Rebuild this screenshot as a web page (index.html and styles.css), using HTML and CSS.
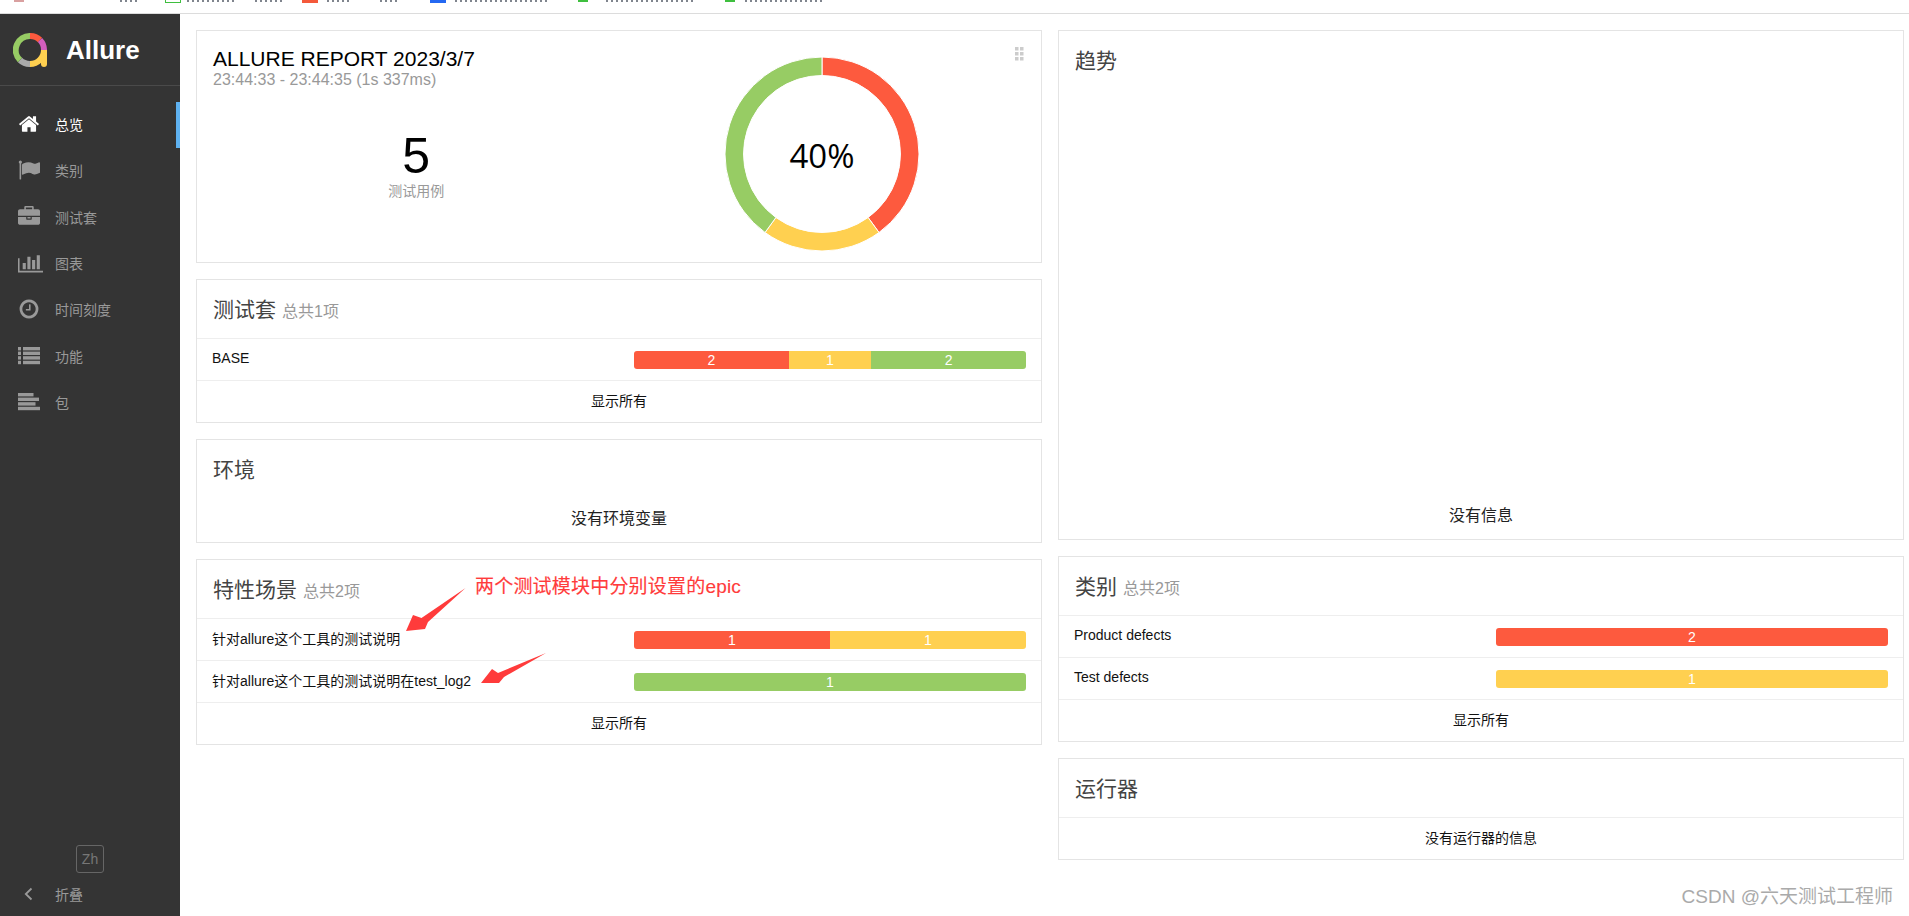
FILE: index.html
```html
<!DOCTYPE html>
<html lang="zh-CN">
<head>
  <meta charset="UTF-8" />
  <title>Allure Report</title>
  <link rel="stylesheet" href="styles.css">
</head>
<body>

  <!-- clipped browser bookmarks bar -->
  <div class="top-strip">
    <i class="frag f1"></i><i class="frag f2"></i><i class="frag f3"></i><i class="frag f4"></i>
    <i class="frag f5"></i><i class="frag f6"></i><i class="frag f7"></i><i class="frag f8"></i>
    <i class="frag f9"></i><i class="frag f10"></i><i class="frag f11"></i><i class="frag f12"></i>
    <i class="frag f13"></i><i class="frag f14"></i>
  </div>

  <div class="app">
    <aside class="sidebar">
      <div class="brand">
        <svg class="brand-logo" viewBox="0 0 34 34">
          <path d="M17 3 A14 14 0 0 1 27 7" fill="none" stroke="#fd5a3e" stroke-width="6" />
          <path d="M27 7 A14 14 0 0 1 31 17" fill="none" stroke="#d35ebe" stroke-width="6" />
          <path d="M31 17 A14 14 0 0 1 17 31" fill="none" stroke="#ffd050" stroke-width="6" />
          <path d="M17 31 A14 14 0 0 1 7 27" fill="none" stroke="#aaaaaa" stroke-width="6" />
          <path d="M7 27 A14 14 0 0 1 17 3" fill="none" stroke="#97cc64" stroke-width="6" />
          <path d="M28 17 H34 V31 Q34 34 31 34 Q28 34 28 31 Z" fill="#ffd050" />
        </svg>
        <span class="brand-name">Allure</span>
      </div>

      <nav class="nav">
        <a class="nav-item active">
          <span class="nav-icon"><svg width="22" height="22" viewBox="0 0 1792 1792"><path d="M1472 992v480q0 26-19 45t-45 19h-384v-384h-256v384h-384q-26 0-45-19t-19-45v-480q0-1 .5-3t.5-3l575-474 575 474q1 2 1 6zm223-69l-62 74q-8 9-21 11h-3q-13 0-21-7l-692-577-692 577q-12 8-24 7-13-2-21-11l-62-74q-8-10-7-23.500t11-21.500l719-599q32-26 76-26t76 26l244 204v-195q0-14 9-23t23-9h192q14 0 23 9t9 23v408l219 182q10 8 11 21.500t-7 23.500z"/></svg></span>
          总览
        </a>
        <a class="nav-item">
          <span class="nav-icon"><svg width="22" height="22" viewBox="0 0 1792 1792"><path d="M320 256q0 72-64 110v1266q0 13-9.500 22.500t-22.500 9.500h-64q-13 0-22.500-9.500t-9.500-22.500v-1266q-64-38-64-110 0-53 37.500-90.500t90.500-37.500 90.500 37.500 37.500 90.500zm1472 64v763q0 25-12.500 38.500t-39.500 27.500q-215 116-369 116-61 0-123.500-22t-108.500-48-115.500-48-142.500-22q-192 0-464 146-17 9-33 9-26 0-45-19t-19-45v-742q0-32 31-55 21-14 79-43 236-120 421-120 107 0 200 29t219 88q38 19 88 19 54 0 117.500-21t110-47 88-47 54.500-21q26 0 45 19t19 45z"/></svg></span>
          类别
        </a>
        <a class="nav-item">
          <span class="nav-icon"><svg width="22" height="22" viewBox="0 0 1792 1792"><path d="M640 256h512v-128h-512v128zm1152 640v480q0 66-47 113t-113 47h-1472q-66 0-113-47t-47-113v-480h672v160q0 26 19 45t45 19h320q26 0 45-19t19-45v-160h672zm-768 0v128h-256v-128h256zm768-480v384h-1792v-384q0-66 47-113t113-47h352v-160q0-40 28-68t68-28h576q40 0 68 28t28 68v160h352q66 0 113 47t47 113z"/></svg></span>
          测试套
        </a>
        <a class="nav-item">
          <span class="nav-icon"><svg width="25" height="22" viewBox="0 0 2048 1792"><path d="M640 896v512h-256v-512h256zm384-512v1024h-256v-1024h256zm1024 1152v128h-2048v-1152h128v1024h1920zm-640-896v768h-256v-768h256zm384-384v1152h-256v-1152h256z"/></svg></span>
          图表
        </a>
        <a class="nav-item">
          <span class="nav-icon"><svg width="22" height="22" viewBox="0 0 1792 1792"><path d="M1024 544v448q0 14-9 23t-23 9h-320q-14 0-23-9t-9-23v-64q0-14 9-23t23-9h224v-352q0-14 9-23t23-9h64q14 0 23 9t9 23zm416 352q0-148-73-273t-198-198-273-73-273 73-198 198-73 273 73 273 198 198 273 73 273-73 198-198 73-273zm224 0q0 209-103 385.500t-279.500 279.500-385.500 103-385.500-103-279.500-279.500-103-385.500 103-385.500 279.500-279.500 385.500-103 385.500 103 279.500 279.500 103 385.500z"/></svg></span>
          时间刻度
        </a>
        <a class="nav-item">
          <span class="nav-icon"><svg width="22" height="18" viewBox="0 0 22 18">
            <rect x="0" y="0" width="3" height="3.400" /><rect x="5" y="0" width="17" height="3.400" />
            <rect x="0" y="4.600" width="3" height="3.400" /><rect x="5" y="4.600" width="17" height="3.400" />
            <rect x="0" y="9.200" width="3" height="3.400" /><rect x="5" y="9.200" width="17" height="3.400" />
            <rect x="0" y="13.800" width="3" height="3.400" /><rect x="5" y="13.800" width="17" height="3.400" />
          </svg></span>
          功能
        </a>
        <a class="nav-item">
          <span class="nav-icon"><svg width="22" height="18" viewBox="0 0 22 18">
            <rect x="0" y="0" width="15.500" height="3.400" />
            <rect x="0" y="4.600" width="21" height="3.400" />
            <rect x="0" y="9.200" width="17.500" height="3.400" />
            <rect x="0" y="13.800" width="22" height="3.400" />
          </svg></span>
          包
        </a>
      </nav>

      <div class="sidebar-foot">
        <span class="lang">Zh</span>
        <a class="collapse">
          <svg class="collapse-icon" width="9" height="14" viewBox="0 0 9 14"><polyline points="7.500,1.500 1.800,7 7.500,12.500" /></svg>
          折叠
        </a>
      </div>
    </aside>

    <main class="content">
      <div class="col">
        <section class="card report">
          <svg class="drag" width="9" height="14" viewBox="0 0 9 14">
            <rect x="0" y="0" width="3.500" height="3.500" /><rect x="5" y="0" width="3.500" height="3.500" />
            <rect x="0" y="5" width="3.500" height="3.500" /><rect x="5" y="5" width="3.500" height="3.500" />
            <rect x="0" y="10" width="3.500" height="3.500" /><rect x="5" y="10" width="3.500" height="3.500" />
          </svg>
          <div class="report-info">
            <h2 class="report-title">ALLURE REPORT 2023/3/7</h2>
            <div class="report-time">23:44:33 - 23:44:35 (1s 337ms)</div>
            <div class="report-count">5</div>
            <div class="report-label">测试用例</div>
          </div>
          <div class="report-chart">
            <svg width="196" height="196" viewBox="-98 -98 196 196">
              <path class="arc" fill="#fd5a3e" d="M0,-97 A97,97 0 0 1 57,78.500 L46.100,63.500 A78.500,78.500 0 0 0 0,-78.500 Z" />
              <path class="arc" fill="#ffd050" d="M57,78.500 A97,97 0 0 1 -57,78.500 L-46.100,63.500 A78.500,78.500 0 0 0 46.100,63.500 Z" />
              <path class="arc" fill="#97cc64" d="M-57,78.500 A97,97 0 0 1 0,-97 L0,-78.500 A78.500,78.500 0 0 0 -46.100,63.500 Z" />
              <text class="chart-text" x="0" y="14" text-anchor="middle">40%</text>
            </svg>
          </div>
        </section>

        <section class="card">
          <div class="card-head with-line"><h2>测试套</h2><span class="total">总共1项</span></div>
          <div class="row">
            <span class="row-name">BASE</span>
            <div class="bar">
              <span class="seg failed" style="width: 39.500%">2</span>
              <span class="seg broken" style="width: 21%">1</span>
              <span class="seg passed" style="width: 39.500%">2</span>
            </div>
          </div>
          <a class="show-all">显示所有</a>
        </section>

        <section class="card">
          <div class="card-head"><h2>环境</h2></div>
          <div class="empty">没有环境变量</div>
        </section>

        <section class="card epics">
          <div class="card-head with-line"><h2>特性场景</h2><span class="total">总共2项</span></div>
          <div class="row">
            <span class="row-name">针对allure这个工具的测试说明</span>
            <div class="bar">
              <span class="seg failed" style="width: 50%">1</span>
              <span class="seg broken" style="width: 50%">1</span>
            </div>
          </div>
          <div class="row">
            <span class="row-name">针对allure这个工具的测试说明在test_log2</span>
            <div class="bar">
              <span class="seg passed" style="width: 100%">1</span>
            </div>
          </div>
          <a class="show-all">显示所有</a>
          <!-- hand-drawn screenshot annotation -->
          <div class="note">两个测试模块中分别设置的epic</div>
          <svg class="note-arrows" width="150" height="100" viewBox="400 586 150 100">
            <polygon points="465.500,588 428,622 425,629 406,631 413,615 421.500,618" />
            <polygon points="546,653 504,677 499,683 481,683 492,669 498,673" />
          </svg>
        </section>
      </div>

      <div class="col">
        <section class="card trend">
          <div class="card-head"><h2>趋势</h2></div>
          <div class="empty">没有信息</div>
        </section>

        <section class="card">
          <div class="card-head with-line"><h2>类别</h2><span class="total">总共2项</span></div>
          <div class="row">
            <span class="row-name">Product defects</span>
            <div class="bar">
              <span class="seg failed" style="width: 100%">2</span>
            </div>
          </div>
          <div class="row">
            <span class="row-name">Test defects</span>
            <div class="bar">
              <span class="seg broken" style="width: 100%">1</span>
            </div>
          </div>
          <a class="show-all">显示所有</a>
        </section>

        <section class="card">
          <div class="card-head with-line"><h2>运行器</h2></div>
          <a class="show-all">没有运行器的信息</a>
        </section>
      </div>
    </main>
  </div>

  <div class="watermark">CSDN @六天测试工程师</div>

</body>
</html>
```

FILE: styles.css
```css
:root {
  --failed: #fd5a3e;
  --broken: #ffd050;
  --passed: #97cc64;
  --line: #e4e4e4;
  --line-light: #eeeeee;
  --muted: #999999;
}

* {
  box-sizing: border-box;
}

html, body {
  height: 100%;
}

body {
  margin: 0;
  overflow: hidden;
  background: #fff;
  color: #000;
  font-family: "Liberation Sans", "Noto Sans CJK SC", sans-serif;
  font-size: 14px;
  display: flex;
  flex-direction: column;
}

/* top strip */

.top-strip {
  height: 14px;
  flex-shrink: 0;
  display: flex;
  align-items: flex-start;
  border-bottom: 1px solid #dcdcdc;
}

.frag {
  display: block;
  height: 2px;
  background: repeating-linear-gradient(90deg, #80858e 0 2px, transparent 2px 5px);
}

.f1 { margin-left: 14px; width: 10px; background: #d9a0a0; }
.f2 { margin-left: 96px; width: 17px; }
.f3 { margin-left: 28px; width: 16px; height: 3px; background: #fff; border: 1px solid #3fbf3f; border-top: 0; }
.f4 { margin-left: 6px; width: 50px; }
.f5 { margin-left: 18px; width: 30px; }
.f6 { margin-left: 17px; width: 16px; height: 3px; background: #f4593b; }
.f7 { margin-left: 9px; width: 23px; }
.f8 { margin-left: 30px; width: 20px; }
.f9 { margin-left: 30px; width: 16px; height: 3px; background: #2468f2; }
.f10 { margin-left: 9px; width: 95px; }
.f11 { margin-left: 28px; width: 10px; background: #3fbf3f; }
.f12 { margin-left: 18px; width: 89px; }
.f13 { margin-left: 30px; width: 10px; background: #3fbf3f; }
.f14 { margin-left: 10px; width: 80px; }

.app {
  flex: 1;
  display: flex;
  min-height: 0;
}

/* sidebar */

.sidebar {
  width: 180px;
  flex-shrink: 0;
  background: #343434;
  color: var(--muted);
  display: flex;
  flex-direction: column;
}

.brand {
  height: 72px;
  padding: 19px 0 0 13px;
  display: flex;
  align-items: flex-start;
  border-bottom: 1px solid #4a4a4a;
}

.brand-logo {
  width: 34px;
  height: 34px;
}

.brand-name {
  margin-left: 19px;
  color: #fff;
  font-size: 26px;
  font-weight: bold;
  line-height: 34px;
}

.nav {
  padding-top: 16px;
}

.nav-item {
  height: 46.300px;
  display: flex;
  align-items: center;
  padding: 0 0 2px 18px;
  font-size: 14px;
}

.nav-icon {
  width: 37px;
  flex-shrink: 0;
  display: flex;
  align-items: center;
}

.nav-icon svg {
  fill: var(--muted);
}

.nav-item.active {
  color: #fff;
  border-right: 4px solid #5eb1f0;
}

.nav-item.active .nav-icon svg {
  fill: #fff;
}

.sidebar-foot {
  margin-top: auto;
}

.lang {
  display: block;
  width: 28px;
  height: 28px;
  margin: 0 0 3px 76px;
  border: 1px solid #666;
  border-radius: 3px;
  color: #777;
  font-size: 14px;
  line-height: 26px;
  text-align: center;
}

.collapse {
  height: 40px;
  display: flex;
  align-items: center;
  padding: 0 0 4px 24px;
}

.collapse-icon {
  margin-right: 22px;
  fill: none;
  stroke: var(--muted);
  stroke-width: 1.800;
}

/* content */

.content {
  flex: 1;
  min-width: 0;
  padding: 16px 5px 0 16px;
  display: grid;
  grid-template-columns: 1fr 1fr;
  gap: 16px;
  align-items: start;
}

.col {
  display: flex;
  flex-direction: column;
  gap: 16px;
}

.card {
  position: relative;
  border: 1px solid var(--line);
  background: #fff;
}

.card-head {
  height: 58px;
  padding: 0 15px 2px 16px;
  display: flex;
  align-items: center;
  gap: 6px;
}

.card-head.with-line {
  height: 59px;
  border-bottom: 1px solid var(--line-light);
}

.card-head h2 {
  margin: 0;
  font-size: 21px;
  font-weight: normal;
  color: #444;
}

.total {
  font-size: 16px;
  color: var(--muted);
  padding-top: 4px;
}

.row {
  height: 42px;
  padding: 0 15px;
  display: grid;
  grid-template-columns: 1fr 392px;
  align-items: center;
  border-bottom: 1px solid var(--line-light);
  color: #111;
}

.row-name {
  padding-bottom: 4px;
}

.bar {
  height: 18px;
  display: flex;
  border-radius: 3px;
  overflow: hidden;
}

.seg {
  color: #fff;
  font-size: 14px;
  line-height: 18px;
  text-align: center;
}

.failed { background: var(--failed); }
.broken { background: var(--broken); }
.passed { background: var(--passed); }

.show-all {
  display: block;
  height: 41px;
  line-height: 40px;
  text-align: center;
  color: #111;
}

.empty {
  height: 44px;
  line-height: 42px;
  text-align: center;
  font-size: 16px;
  color: #222;
}

.trend {
  height: 510px;
  display: flex;
  flex-direction: column;
}

.trend .empty {
  margin-top: auto;
}

/* summary card */

.report {
  height: 233px;
  padding: 16px 15px 0 16px;
  display: grid;
  grid-template-columns: 1fr 1fr;
}

.report-title {
  margin: 0;
  font-size: 21px;
  font-weight: normal;
  line-height: 24px;
}

.report-time {
  font-size: 16px;
  line-height: 18px;
  color: var(--muted);
}

.report-count {
  margin-top: 41px;
  font-size: 50px;
  line-height: 52px;
  text-align: center;
}

.report-label {
  line-height: 18px;
  text-align: center;
  color: var(--muted);
}

.report-chart {
  display: flex;
  justify-content: center;
  padding: 9px 2px 0 0;
}

.arc {
  stroke: #fff;
  stroke-width: 1;
}

.chart-text {
  font-family: "Open Sans", "Liberation Sans", sans-serif;
  font-size: 33px;
}

.drag {
  position: absolute;
  top: 16px;
  right: 17px;
  fill: #cccccc;
}

/* annotation */

.note {
  position: absolute;
  left: 278px;
  top: 15px;
  color: #ff3b3b;
  font-size: 19px;
  letter-spacing: 0.200px;
  line-height: 24px;
  white-space: nowrap;
  -webkit-text-stroke: 0.150px #ff3b3b;
}

.note-arrows {
  position: absolute;
  left: 203px;
  top: 26px;
  fill: #ff3b3b;
}

.watermark {
  position: absolute;
  right: 16px;
  bottom: 7px;
  color: #aaaaaa;
  font-size: 19px;
  line-height: 24px;
}
```
